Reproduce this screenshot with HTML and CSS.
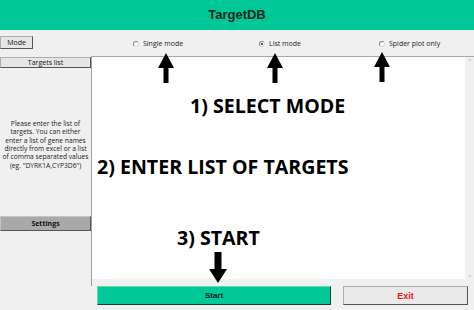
FILE: index.html
```html
<!DOCTYPE html>
<html lang="en">
<head>
    <meta charset="UTF-8">
    <title>TargetDB</title>
    <link rel="stylesheet" href="styles.css">
</head>
<body>
    <header class="titlebar">TargetDB</header>

    <div class="app">
        <div class="mode-cell">
            <button class="btn mode-btn">Mode</button>
        </div>
        <div class="radios">
            <label class="radio r-single"><span class="dot"></span>Single mode</label>
            <label class="radio r-list"><span class="dot on"></span>List mode</label>
            <label class="radio r-spider"><span class="dot"></span>Spider plot only</label>
        </div>

        <aside class="side">
            <button class="btn side-btn">Targets list</button>
            <p class="help">Please enter the list of targets. You can either enter a list of gene names directly from excel or a list of comma separated values (eg. "DYRK1A,CYP3D6")</p>
            <button class="btn side-btn settings">Settings</button>
        </aside>
        <div class="editor">
            <div class="text-area"></div>
            <div class="scrollbar">
                <span class="caret up">&#8963;</span>
                <span class="caret down">&#8964;</span>
            </div>
        </div>

        <div class="side-foot"></div>
        <div class="actions">
            <button class="btn start">Start</button>
            <button class="btn exit">Exit</button>
        </div>
    </div>

    <!-- annotations drawn over the screenshot -->
    <div class="note n1">1) SELECT MODE</div>
    <div class="note n2">2) ENTER LIST OF TARGETS</div>
    <div class="note n3">3) START</div>

    <svg class="arrow a1" width="16" height="30" viewBox="0 0 16 30"><path d="M8 0 L16 15 L10.5 15 L10.5 30 L5.5 30 L5.5 15 L0 15 Z" fill="#000"/></svg>
    <svg class="arrow a2" width="16" height="30" viewBox="0 0 16 30"><path d="M8 0 L16 15 L10.5 15 L10.5 30 L5.5 30 L5.5 15 L0 15 Z" fill="#000"/></svg>
    <svg class="arrow a3" width="16" height="30" viewBox="0 0 16 30"><path d="M8 0 L16 15 L10.5 15 L10.5 30 L5.5 30 L5.5 15 L0 15 Z" fill="#000"/></svg>
    <svg class="arrow a4" width="18" height="31" viewBox="0 0 18 31"><path d="M5.5 0 L12.5 0 L12.5 17 L18 17 L9 31 L0 17 L5.5 17 Z" fill="#000"/></svg>
</body>
</html>
```

FILE: styles.css
```css
* {
    margin: 0;
    padding: 0;
    box-sizing: border-box;
}

body {
    width: 474px;
    height: 310px;
    overflow: hidden;
    background: #f0f0f0;
    font-family: 'Open Sans', sans-serif;
    position: relative;
}

.titlebar {
    height: 30px;
    background: #00c997;
    color: #10241d;
    font-family: 'Liberation Sans', Arial, sans-serif;
    font-weight: 700;
    font-size: 13px;
    text-align: center;
    line-height: 30px;
}

.app {
    display: grid;
    grid-template-columns: 92px 1fr;
    grid-template-rows: 26px 226px 1fr;
    height: 280px;
}

.btn {
    display: block;
    font-family: 'Open Sans', sans-serif;
    font-size: 7px;
    color: #111;
    background: #e6e6e6;
    border: 1px solid #adadad;
    border-right-color: #555;
    border-bottom-color: #555;
    cursor: pointer;
}

.mode-cell {
    padding-top: 6px;
}

.mode-btn {
    width: 33px;
    height: 13px;
    line-height: 10px;
}

.radios {
    display: flex;
    align-items: center;
    padding-left: 41px;
    padding-top: 1px;
    font-size: 7px;
    color: #222;
}

.radio {
    display: flex;
    align-items: center;
    gap: 4px;
}

.r-single { width: 126px; }
.r-list { width: 120px; }

.dot {
    width: 6px;
    height: 6px;
    border-radius: 50%;
    border: 1px solid #8a8a8a;
    border-bottom-color: #ddd;
    border-right-color: #ddd;
    background: #fff;
    position: relative;
}

.dot.on::after {
    content: "";
    position: absolute;
    left: 1px;
    top: 1px;
    width: 2px;
    height: 2px;
    border-radius: 50%;
    background: #222;
}

.side {
    display: flex;
    flex-direction: column;
    border-right: 1px solid #a0a0a0;
    padding-top: 1px;
}

.side-btn {
    height: 11px;
    width: 91px;
    line-height: 8px;
}

.help {
    flex: 1;
    display: flex;
    align-items: center;
    justify-content: center;
    text-align: center;
    font-size: 6.7px;
    line-height: 8.3px;
    color: #222;
    padding: 6px 2px 0;
}

.settings {
    height: 15px;
    margin-bottom: 51px;
    background: #a9a9a9;
    font-weight: 700;
    border-color: #c4c4c4 #555 #555 #c4c4c4;
}

.editor {
    display: flex;
    border-top: 1px solid #a8a8a8;
}

.text-area {
    flex: 1;
    background: #fff;
    margin-bottom: 3px;
}

.scrollbar {
    width: 9px;
    display: flex;
    flex-direction: column;
    justify-content: space-between;
    align-items: center;
    background: #f0f0f0;
    padding: 2px 0 4px;
}

.caret {
    font-size: 7px;
    line-height: 6px;
    color: #b0b0b0;
}

.side-foot {
    border-right: 1px solid #a0a0a0;
    height: 4px;
}

.actions {
    display: flex;
    align-items: flex-start;
    padding: 4px 0 0 5px;
    gap: 12px;
}

.start,
.exit {
    height: 19px;
    font-family: 'Liberation Sans', Arial, sans-serif;
    font-weight: 700;
    font-size: 8px;
}

.start {
    width: 234px;
    background: #00c997;
    color: #0b2019;
    border-color: #5fd8b4 #1f3d33 #1f3d33 #5fd8b4;
}

.exit {
    width: 125px;
    background: #e9e9e9;
    color: #e8141e;
    font-size: 9px;
}

.note {
    position: absolute;
    font-family: 'Open Sans', sans-serif;
    font-weight: 700;
    font-size: 19.6px;
    line-height: 20px;
    color: #000;
    white-space: nowrap;
}

.n1 { left: 190px; top: 96px; }
.n2 { left: 97px; top: 157px; }
.n3 { left: 177px; top: 228px; }

.arrow {
    position: absolute;
}

.a1 { left: 158px; top: 53px; }
.a2 { left: 267px; top: 53px; }
.a3 { left: 374px; top: 52px; }
.a4 { left: 209px; top: 252px; }
```
